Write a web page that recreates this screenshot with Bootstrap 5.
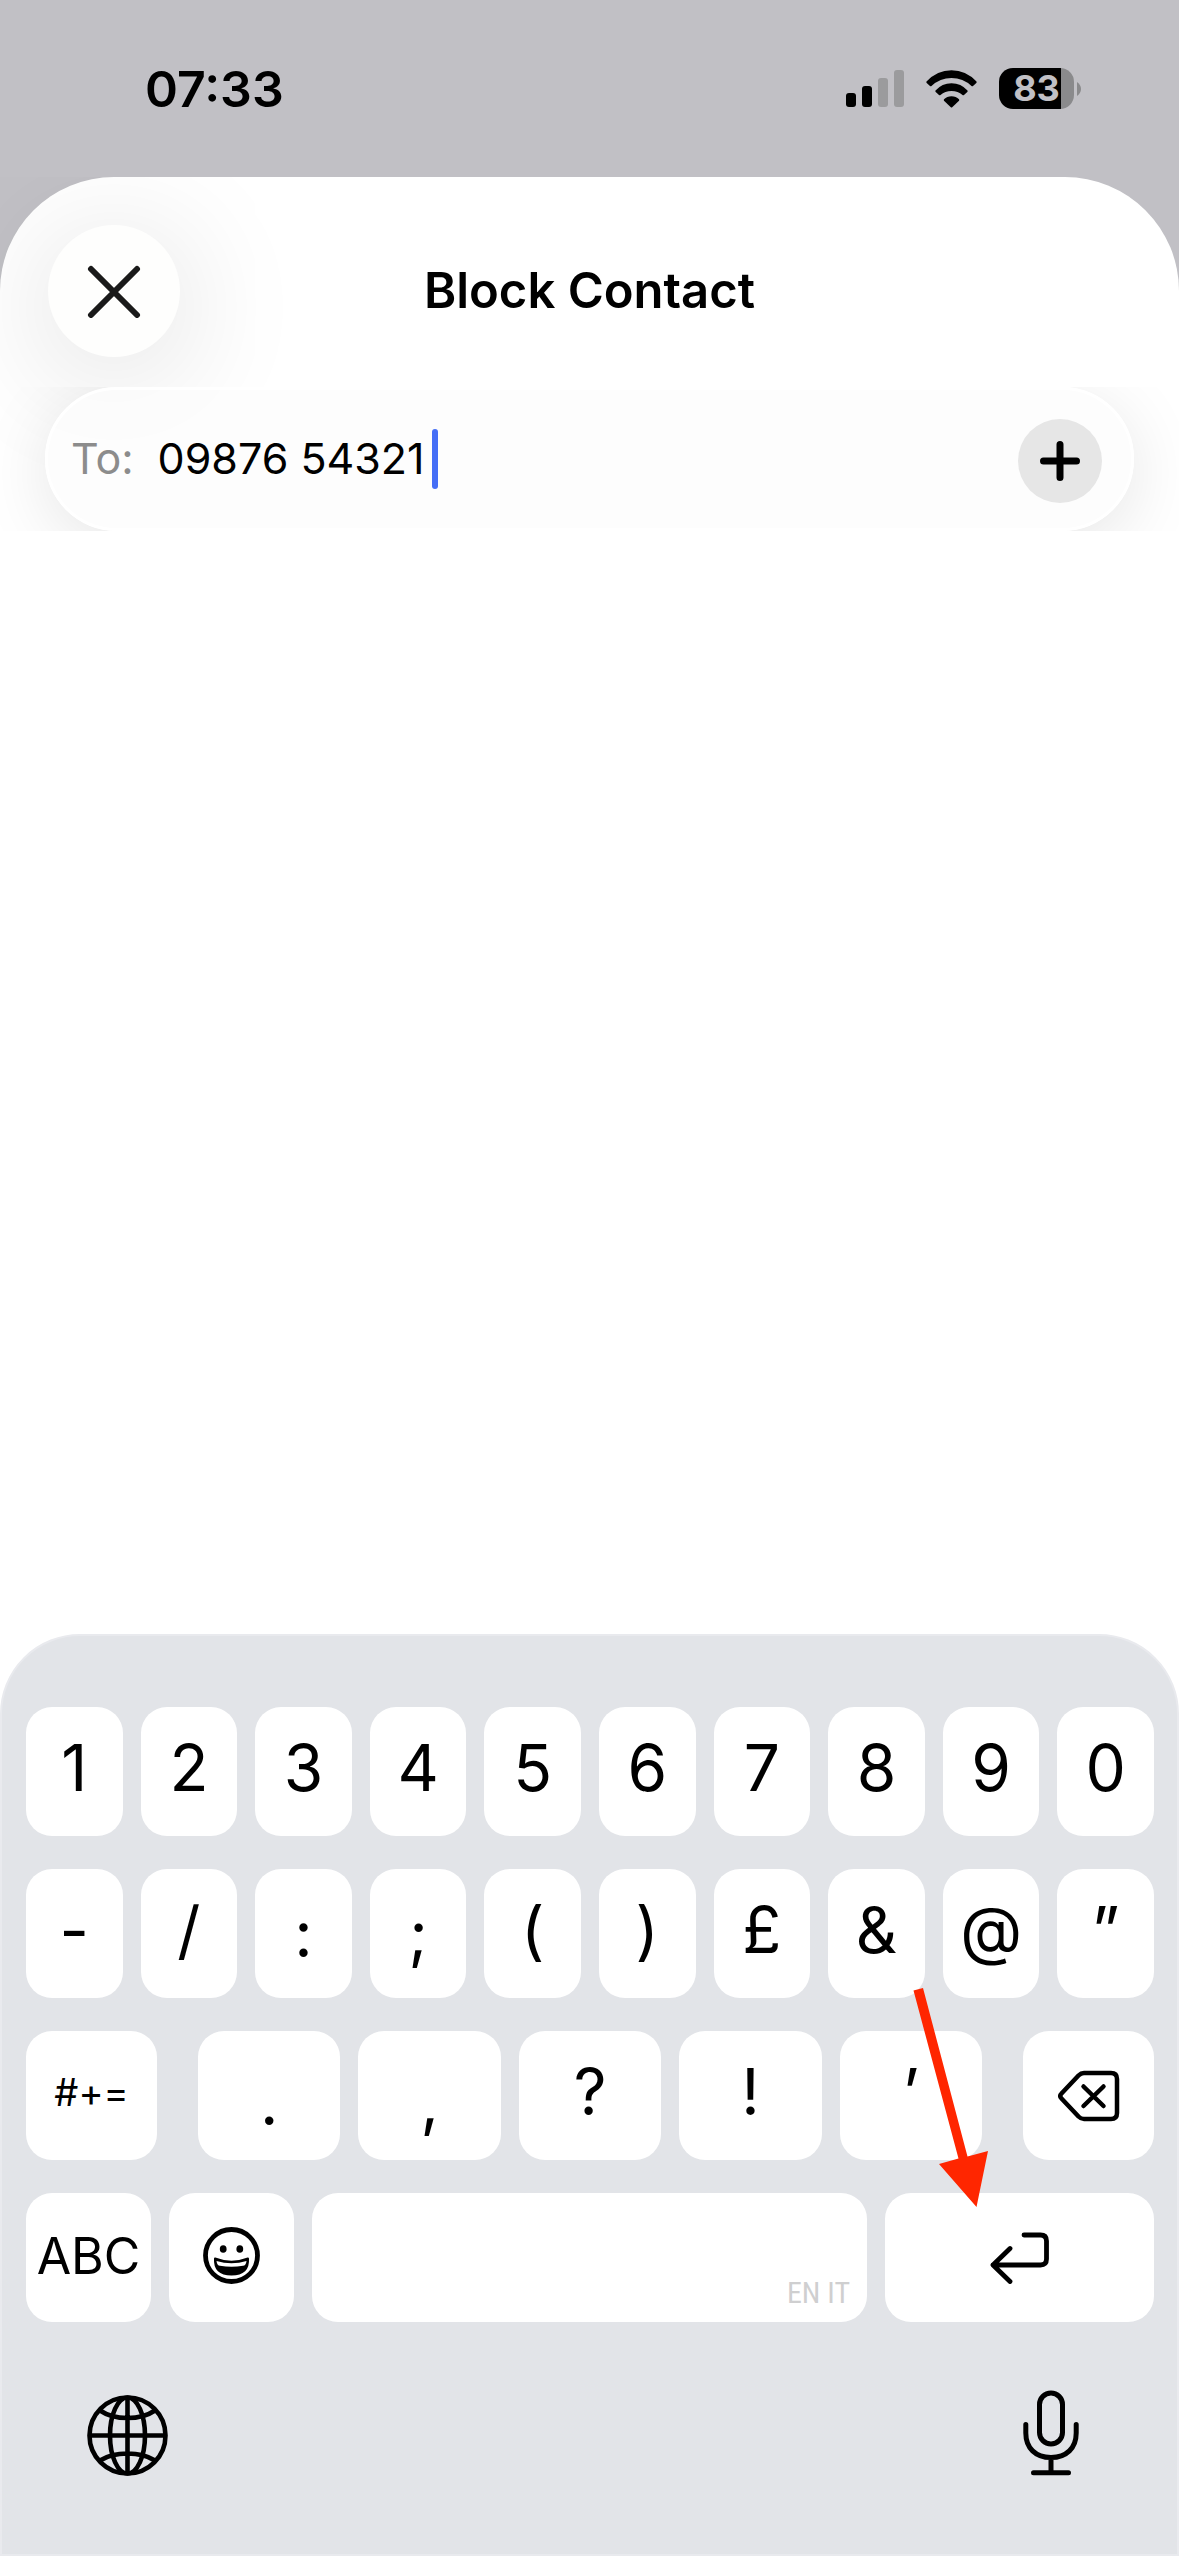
<!DOCTYPE html>
<html lang="en">
<head>
<meta charset="utf-8">
<meta name="viewport" content="width=device-width, initial-scale=1">
<title>Block Contact</title>
<link href="https://cdn.jsdelivr.net/npm/bootstrap@5.3.0/dist/css/bootstrap.min.css" rel="stylesheet">
<style>
body { background: #c1c0c5; color: #000; font-family: Inter, "Liberation Sans", sans-serif; line-height: 1.2; }
svg { display: block; flex: none; }
.statusbar { height: 177px; padding: 0 98px 0 145px; font-size: 50px; font-weight: 600; }
.status-icons { gap: 22px; }
.battery { width: 75px; height: 41px; border-radius: 14px; background: linear-gradient(90deg, #000 62px, #8a8a8c 62px); color: #c1c0c5; font-size: 36px; font-weight: 700; line-height: 41px; }
.battery-nub { margin-left: 1px; }
.sheet { background: #fff; border-radius: 114px 114px 0 0; }
.sheet-head { padding: 48px 48px 30px; }
.sheet-title { font-size: 49px; font-weight: 600; line-height: 60px; }
.round-btn { border: 0; border-radius: 50%; padding: 0; flex: none; color: #000; }
.close-btn { width: 132px; height: 132px; background: #fefefd; box-shadow: 0 16px 130px rgba(0,0,0,.15); }
.side-space { width: 132px; }
.to-strip { padding: 0 45px; }
.to-pill { height: 144px; border: 3px solid #fff; border-radius: 72px; padding: 0 29px 0 23px; background: rgba(252,252,252,.75); box-shadow: 0 14px 70px rgba(0,0,0,.1); font-size: 43px; }
.to-label { color: #8c8c8c; margin-right: 24px; }
.to-input { width: 274px; border: 0; padding: 0; background: transparent; outline: 0; color: #000; }
.caret { width: 6px; height: 60px; border-radius: 3px; background: #456ef6; flex: none; }
.add-btn { width: 84px; height: 84px; background: #e6e6e6; }
.keyboard { background: #e2e4e8; border: 2px solid #e9eaee; border-radius: 80px 80px 0 0; padding: 71px 23px 78px 24px; }
.key-rows { gap: 33px; }
.key-row { gap: 18px; }
.key-row-split { gap: 41px; }
.key { flex: 1 1 0; min-width: 0; height: 129px; border: 0; border-radius: 26px; background: #fff; padding: 0 0 7px; font-size: 64px; line-height: 1; color: #000; }
.key-low { padding: 0; }
.key-dot { padding: 12px 0 0; }
.key-side { flex: 0 0 131px; }
.key-mode { flex: 0 0 125px; padding: 0 0 4px; font-size: 50px; }
.key-sym { font-size: 38px; }
.key-space { padding: 0 17px 14px 0; font-family: "Liberation Sans Narrow", "Roboto Condensed", "Noto Sans ExtraCondensed", "Open Sans Condensed", Roboto, sans-serif; font-size: 30px; color: #cfcfd0; }
.return-wrap { flex: 0 0 269px; }
.pointer-arrow { right: 154px; bottom: 112px; pointer-events: none; }
.dock { padding: 68px 75px 0 61px; }
.dock button { border: 0; background: none; padding: 0; color: #000; }
</style>
<script src="https://cdn.jsdelivr.net/npm/bootstrap@5.3.0/dist/js/bootstrap.bundle.min.js"></script>
</head>
<body class="d-flex flex-column min-vh-100">
<header class="statusbar d-flex align-items-center justify-content-between">
  <time>07:33</time>
  <div class="status-icons d-flex align-items-center">
    <svg width="58" height="38" viewBox="0 0 58 38" role="img" aria-label="Signal">
      <rect x="0" y="23" width="10" height="14" rx="3"/><rect x="16" y="16" width="10" height="21" rx="3"/>
      <rect x="32" y="8" width="10" height="29" rx="3" fill="#9b9b9d"/><rect x="48" y="0" width="10" height="37" rx="3" fill="#9b9b9d"/>
    </svg>
    <svg width="51" height="38" viewBox="0 0 51 38" role="img" aria-label="Wi-Fi">
      <path d="M0.500 11.500Q11 0.200 25.500 0.200T50.500 11.500Q51 12.300 50.300 13L47 16Q46.300 16.600 45.500 16Q37 8 25.500 8T5.500 16Q4.700 16.600 4 16L0.700 13Q0 12.300 0.500 11.500Z"/>
      <path d="M9.500 20.500Q16 13.200 25.500 13.200T41.500 20.500Q42 21.300 41.300 22L38 25Q37.200 25.500 36.500 25Q32 21 25.500 21T14.500 25Q13.800 25.500 13 25L9.700 22Q9 21.300 9.500 20.500Z"/>
      <path d="M18 29.300Q21 26.300 25.500 26.300T33 29.300Q33.500 30 33 30.700L26.200 37.200Q25.500 37.800 24.800 37.200L18 30.700Q17.500 30 18 29.300Z"/>
    </svg>
    <div class="d-flex align-items-center">
      <div class="battery text-center">83</div>
      <svg class="battery-nub" width="6" height="14" viewBox="0 0 6 14" aria-hidden="true"><path d="M2 0Q6 3 6 7T2 14Z" fill="#8a8a8c"/></svg>
    </div>
  </div>
</header>

<main class="sheet flex-fill d-flex flex-column">
  <div class="overflow-hidden">
    <div class="sheet-head d-flex align-items-center">
      <button type="button" class="round-btn close-btn d-flex align-items-center justify-content-center" aria-label="Close">
        <svg width="54" height="54" viewBox="0 0 54 54" fill="none" stroke="#1a1a1a" stroke-width="6" stroke-linecap="round"><path d="M4 5L50 51M50 5L4 51"/></svg>
      </button>
      <h1 class="sheet-title flex-fill text-center m-0">Block Contact</h1>
      <span class="side-space"></span>
    </div>
    <div class="to-strip overflow-hidden position-relative">
      <div class="to-pill d-flex align-items-center">
        <label class="to-label" for="to">To:</label>
        <input class="to-input" id="to" type="text" value="09876 54321">
        <span class="caret"></span>
        <button type="button" class="round-btn add-btn ms-auto mt-1 d-flex align-items-center justify-content-center" aria-label="Add contact">
          <svg width="40" height="40" viewBox="0 0 40 40" fill="none" stroke="#000" stroke-width="7" stroke-linecap="round"><path d="M20 3.500V36.500M3.500 20H36.500"/></svg>
        </button>
      </div>
    </div>
  </div>

  <section class="keyboard mt-auto" aria-label="Keyboard">
    <div class="key-rows d-flex flex-column">
      <div class="key-row d-flex">
        <button class="key">1</button><button class="key">2</button><button class="key">3</button><button class="key">4</button><button class="key">5</button><button class="key">6</button><button class="key">7</button><button class="key">8</button><button class="key">9</button><button class="key">0</button>
      </div>
      <div class="key-row d-flex">
        <button class="key">-</button><button class="key">/</button><button class="key key-low">:</button><button class="key key-low">;</button><button class="key">(</button><button class="key">)</button><button class="key">£</button><button class="key">&amp;</button><button class="key">@</button><button class="key">”</button>
      </div>
      <div class="key-row-split d-flex">
        <button class="key key-side key-sym">#+=</button>
        <div class="key-row d-flex flex-fill">
          <button class="key key-dot">.</button><button class="key key-dot">,</button><button class="key">?</button><button class="key">!</button><button class="key">’</button>
        </div>
        <button class="key key-side p-0 d-flex align-items-center justify-content-center" aria-label="Delete">
          <svg width="62" height="52" viewBox="0 0 62 52" fill="none" stroke="#000" stroke-width="4.500" stroke-linecap="round" stroke-linejoin="round"><path d="M26 3H53Q59 3 59 9V43Q59 49 53 49H26Q23 49 20.500 46.500L3.500 28.500Q1 26 3.500 23.500L20.500 5.500Q23 3 26 3Z"/><path d="M25.500 16.500L45.500 36M45.500 16.500L25.500 36"/></svg>
        </button>
      </div>
      <div class="key-row d-flex">
        <button class="key key-mode">ABC</button>
        <button class="key key-mode d-flex align-items-center justify-content-center" aria-label="Emoji">
          <svg width="57" height="57" viewBox="0 0 57 57"><circle cx="28.500" cy="28.500" r="26" fill="none" stroke="#000" stroke-width="4.800"/><ellipse cx="20.200" cy="22" rx="3.400" ry="3.800"/><ellipse cx="36.800" cy="22" rx="3.400" ry="3.800"/><path d="M12 31.500Q28.500 38 45 31.500Q46 47.500 28.500 47.500T12 31.500Z" stroke="#000" stroke-width="2" stroke-linejoin="round"/><path d="M13.500 34Q28.500 38.500 43.500 34Q43 38.500 40 38.800Q28.500 40.500 17 38.800Q14 38.500 13.500 34Z" fill="#fff"/></svg>
        </button>
        <button class="key key-space d-flex align-items-end justify-content-end">EN IT</button>
        <div class="return-wrap position-relative">
          <button class="key w-100 p-0 d-flex align-items-center justify-content-center" aria-label="Return">
            <svg width="60" height="52" viewBox="0 0 60 52" fill="none" stroke="#000" stroke-width="4.800" stroke-linecap="round" stroke-linejoin="round"><path d="M34 3H50.500Q56.500 3 56.500 9V27Q56.500 33 50.500 33H3M20 16.500L3 33L20 49.500"/></svg>
          </button>
          <svg class="pointer-arrow position-absolute" width="100" height="230" viewBox="0 0 100 230" fill="#ff2600" aria-hidden="true"><path d="M13.500 10.500L23 8L67.500 176.500L88 171L76.500 227L39 184L58.500 178.500Z"/></svg>
        </div>
      </div>
    </div>
    <div class="dock d-flex justify-content-between align-items-end">
      <button type="button" aria-label="Next keyboard">
        <svg width="81" height="81" viewBox="0 0 81 81" fill="none" stroke="#000" stroke-width="4.600"><circle cx="40.500" cy="40.500" r="38"/><ellipse cx="40.500" cy="40.500" rx="17.500" ry="38"/><path d="M40.500 2.500V78.500M2.500 40.500H78.500M13 15.500Q24 23 40.500 23T68 15.500M13 65.500Q24 58.500 40.500 58.500T68 65.500"/></svg>
      </button>
      <button type="button" aria-label="Dictate">
        <svg width="56" height="86" viewBox="0 0 56 86" fill="none" stroke="#000" stroke-width="5" stroke-linecap="round"><rect x="16.500" y="3" width="23" height="51" rx="11.500"/><path d="M2.800 34.500V43C2.800 58 12.500 67.500 28 67.500S53.200 58 53.200 43V34.500M28 68V82.500M10.500 82.800H45.500"/></svg>
      </button>
    </div>
  </section>
</main>
</body>
</html>
